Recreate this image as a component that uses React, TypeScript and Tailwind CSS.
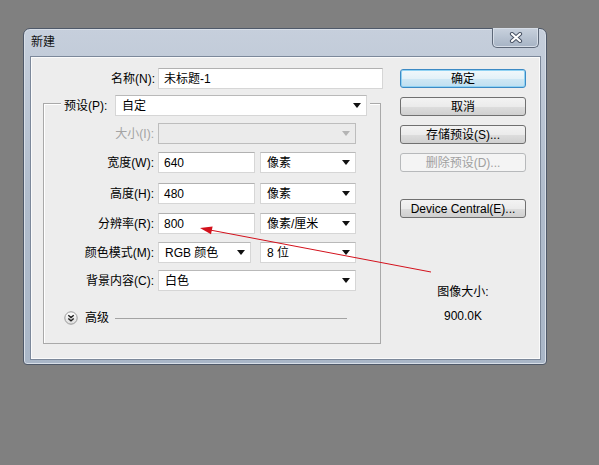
import React from "react"

function Arrow({ light }: { light?: boolean }) {
  return (
    <svg width="8" height="5" viewBox="0 0 8 5" className="shrink-0">
      <polygon points="0,0 8,0 4,5" fill={light ? "#b4b4b4" : "#111"} />
    </svg>
  )
}

function TextBox({ w, children }: { w: string; children: React.ReactNode }) {
  return (
    <div className={`h-[21px] ${w} bg-white border border-[#d6d6d6] border-t-[#b1b1b1] flex items-center pl-[5px]`}>
      {children}
    </div>
  )
}

function Select({ w, children, disabled }: { w: string; children?: React.ReactNode; disabled?: boolean }) {
  return (
    <div
      className={`h-[21px] ${w} border flex items-center justify-between pl-[6px] pr-[5px] ${
        disabled ? "bg-[#ebebeb] border-[#bdbdbd]" : "bg-white border-[#d6d6d6] border-t-[#b9b9b9]"
      }`}
    >
      <span>{children}</span>
      <Arrow light={disabled} />
    </div>
  )
}

function Row({ label, mt, disabled, children }: { label: string; mt: string; disabled?: boolean; children: React.ReactNode }) {
  return (
    <div className={`flex items-center ${mt}`}>
      <span className={`w-[110px] text-right ${disabled ? "text-[#a3a3a3]" : ""}`}>{label}</span>
      <div className="ml-[4px] flex gap-[5px]">{children}</div>
    </div>
  )
}

function Btn({ children, mt, primary, disabled }: { children: React.ReactNode; mt: string; primary?: boolean; disabled?: boolean }) {
  let cls = "border-[#707070] bg-[linear-gradient(#f3f3f3_0%,#ebebeb_50%,#dddddd_51%,#d0d0d0_100%)] text-black"
  if (primary) cls = "border-[#3c8ac4] bg-[linear-gradient(#f1f8fb_0%,#e3f1f8_50%,#cfe8f5_51%,#bfdff0_100%)] shadow-[inset_0_0_0_1px_#8fd2f3] text-black"
  if (disabled) cls = "border-[#b7b9bb] bg-[#f4f4f4] text-[#a0a0a0]"
  return (
    <div className={`h-[19px] w-[126px] rounded-[3px] border flex items-center justify-center ${cls} ${mt}`}>
      {children}
    </div>
  )
}

export default function App() {
  return (
    <div className="relative w-[599px] h-[465px] overflow-hidden bg-[#808080] pt-[28px] pl-[23px] text-[12px] leading-none text-black font-[family-name:'Liberation_Sans','Noto_Sans_CJK_SC',sans-serif]">
      {/* dialog window */}
      <div className="w-[524px] h-[337px] border border-[#4f5969] rounded-t-[7px] rounded-b-[4px] bg-gradient-to-b from-[#c6cfdc] via-[#b0bccc] to-[#a9b6c7] shadow-[inset_0_0_0_1px_#d8dfe8] flex flex-col pl-[6px] pr-[5px] pb-[4px]">
        {/* title bar */}
        <div className="h-[27px] flex justify-between">
          <span className="self-center pl-[1px] pb-[1px] text-[#111]">新建</span>
          <div className="w-[47px] h-[20px] mr-[2px] -mt-px border border-[#5d6878] border-t-0 rounded-b-[5px] bg-gradient-to-b from-[#c9d2de] to-[#a6b3c4] shadow-[inset_0_0_0_1px_#d7dee8] flex items-center justify-center">
            <svg width="14" height="11" viewBox="0 0 14 11">
              <path d="M3 2 L11 9 M11 2 L3 9" stroke="#4a5466" strokeWidth="4.2" strokeLinecap="round" />
              <path d="M3 2 L11 9 M11 2 L3 9" stroke="#ffffff" strokeWidth="2.2" strokeLinecap="round" />
            </svg>
          </div>
        </div>

        {/* client area */}
        <div className="h-[304px] border border-[#7c889a] bg-[#ededed] shadow-[inset_0_0_0_1px_#fbfbfb] flex pt-[11px]">
          {/* left column */}
          <div className="w-[352px] flex flex-col">
            <div className="flex items-center">
              <span className="w-[124px] text-right">名称(N):</span>
              <div className="ml-[3px]">
                <TextBox w="w-[225px]">未标题-1</TextBox>
              </div>
            </div>

            {/* group box */}
            <div className="mt-[14px] ml-[12px] w-[338px] border border-[#a9a9a9] shadow-[inset_1px_1px_0_#fff] pb-[17px] flex flex-col">
              <div className="-mt-[9px] ml-[17px] px-[3px] w-fit bg-[#ededed] flex items-center">
                <span className="w-[51px]">预设(P):</span>
                <Select w="w-[252px]">自定</Select>
              </div>

              <Row label="大小(I):" mt="mt-[7px]" disabled>
                <Select w="w-[198px]" disabled />
              </Row>
              <Row label="宽度(W):" mt="mt-[8px]">
                <TextBox w="w-[97px]">640</TextBox>
                <Select w="w-[96px]">像素</Select>
              </Row>
              <Row label="高度(H):" mt="mt-[10px]">
                <TextBox w="w-[97px]">480</TextBox>
                <Select w="w-[96px]">像素</Select>
              </Row>
              <Row label="分辨率(R):" mt="mt-[9px]">
                <TextBox w="w-[97px]">800</TextBox>
                <Select w="w-[96px]">像素/厘米</Select>
              </Row>
              <Row label="颜色模式(M):" mt="mt-[8px]">
                <Select w="w-[93px]">RGB 颜色</Select>
                <div className="ml-[4px]">
                  <Select w="w-[96px]">8 位</Select>
                </div>
              </Row>
              <Row label="背景内容(C):" mt="mt-[7px]">
                <Select w="w-[198px]">白色</Select>
              </Row>

              <div className="mt-[19px] ml-[20px] h-[16px] flex items-center">
                <svg width="14" height="14" viewBox="0 0 14 14">
                  <defs>
                    <linearGradient id="adv" x1="0" y1="0" x2="0" y2="1">
                      <stop offset="0" stopColor="#ffffff" />
                      <stop offset="1" stopColor="#dcdcdc" />
                    </linearGradient>
                  </defs>
                  <circle cx="7" cy="7" r="6.2" fill="url(#adv)" stroke="#9a9a9a" strokeWidth="1" />
                  <path d="M4.3 4.2 L7 6.6 L9.7 4.2 M4.3 7.4 L7 9.8 L9.7 7.4" fill="none" stroke="#222" strokeWidth="1.4" />
                </svg>
                <span className="ml-[7px]">高级</span>
                <div className="ml-[6px] w-[232px] h-px bg-[#a3a3a3]" />
              </div>
            </div>
          </div>

          {/* right column */}
          <div className="ml-[17px] w-[126px] mt-[1px] flex flex-col">
            <Btn mt="" primary>确定</Btn>
            <Btn mt="mt-[9px]">取消</Btn>
            <Btn mt="mt-[9px]">存储预设(S)...</Btn>
            <Btn mt="mt-[9px]" disabled>删除预设(D)...</Btn>
            <Btn mt="mt-[27px]">Device Central(E)...</Btn>
            <div className="mt-[66px] text-center leading-[16px]">图像大小:</div>
            <div className="mt-[8px] text-center leading-[16px]">900.0K</div>
          </div>
        </div>
      </div>

      {/* red annotation arrow */}
      <svg className="absolute inset-0 pointer-events-none" width="599" height="465" viewBox="0 0 599 465">
        <line x1="210" y1="230" x2="431" y2="272" stroke="#d3111c" strokeWidth="1" />
        <polygon points="200,228 211,234.3 212.6,226.4" fill="#d3111c" />
      </svg>
    </div>
  )
}
